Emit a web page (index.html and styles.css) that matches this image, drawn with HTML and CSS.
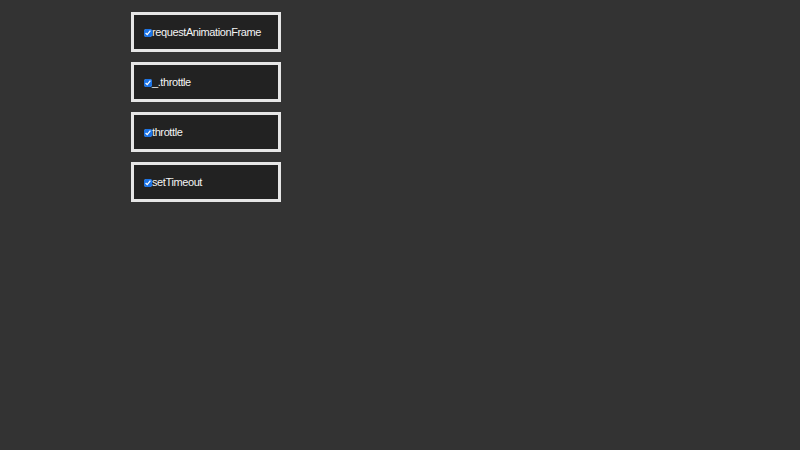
FILE: index.html
```html
<!DOCTYPE html>
<html>
<head>
<meta charset="utf-8">
<link rel="stylesheet" href="styles.css">
</head>
<body>
<div class="list">
  <div class="item"><label><input type="checkbox" checked>requestAnimationFrame</label></div>
  <div class="item"><label><input type="checkbox" checked>_.throttle</label></div>
  <div class="item"><label><input type="checkbox" checked>throttle</label></div>
  <div class="item"><label><input type="checkbox" checked>setTimeout</label></div>
</div>
</body>
</html>
```
FILE: styles.css
```css
html, body {
  margin: 0;
  background: #333333;
}
.list {
  padding: 12px 0 0 131px;
  display: flex;
  flex-direction: column;
  gap: 10px;
}
.item {
  box-sizing: border-box;
  width: 150px;
  height: 40px;
  border: 3px solid #e6e6e6;
  background: #222222;
  display: flex;
  align-items: center;
  padding-left: 10px;
}
label {
  display: flex;
  align-items: center;
  color: #f4f4f4;
  font-family: "Liberation Sans", Arial, sans-serif;
  font-size: 11px;
  letter-spacing: -0.4px;
}
input[type="checkbox"] {
  margin: 1px 0 0 0;
  width: 8px;
  height: 8px;
  accent-color: #1a73e8;
}
```
